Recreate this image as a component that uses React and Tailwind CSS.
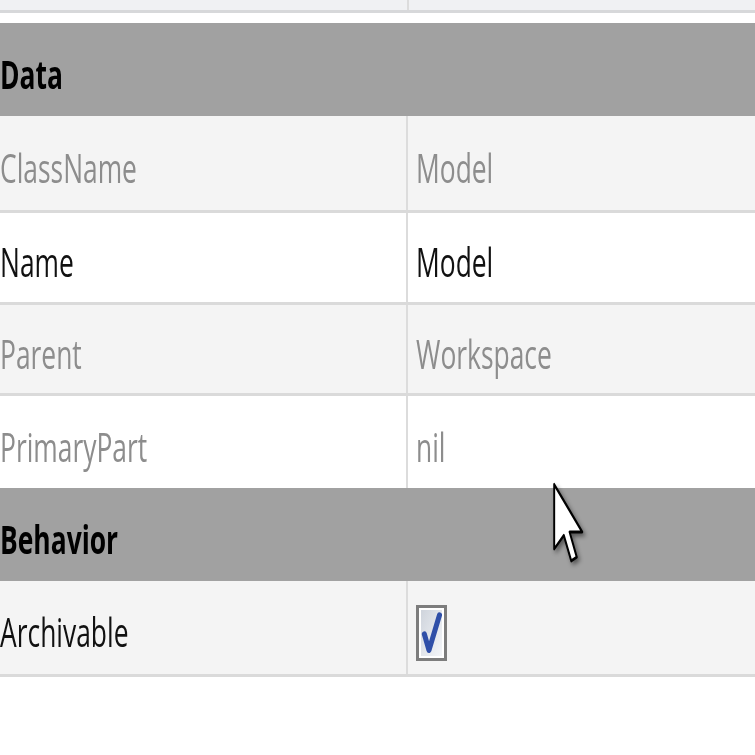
import React from "react";

const T = ({ children, className = "" }) => (
  <span className={"inline-block origin-left scale-x-[0.66] whitespace-nowrap text-[40px] leading-none " + className}>
    {children}
  </span>
);

function Row({ label, value, bg, dim, h, border = true, children }) {
  const color = dim ? "text-[#8d8d8d]" : "text-[#111]";
  return (
    <div className={"flex " + bg + " " + h + (border ? " border-b-[3px] border-[#dadada]" : "")}>
      <div className="w-[408px] shrink-0 border-r-[2px] border-[#dcdcdc] flex items-center pt-[9px]">
        <T className={color}>{label}</T>
      </div>
      <div className="flex-1 flex items-center pl-[8px] pt-[9px]">
        {children ? children : <T className={color}>{value}</T>}
      </div>
    </div>
  );
}

function Header({ label, h }) {
  return (
    <div className={"flex items-center bg-[#a1a1a1] pt-[9px] " + h}>
      <T className="font-bold text-black">{label}</T>
    </div>
  );
}

function Checkbox() {
  return (
    <div className="mt-[2px] w-[31px] h-[56px] border-[3px] border-[#7d7d7d] bg-white p-[2px]">
      <div className="w-full h-full bg-gradient-to-br from-[#cfd4dc] to-[#f4f6f9] relative">
        <svg viewBox="0 0 10 20" preserveAspectRatio="none" className="absolute inset-0 w-full h-full">
          <path d="M1.6 10.5 L3.8 17.5 L8.8 2.2" fill="none" stroke="#2f4fa8" strokeWidth="2.4" strokeLinejoin="round" strokeLinecap="round" />
        </svg>
      </div>
    </div>
  );
}

export default function App() {
  return (
    <div className="relative w-[755px] h-[755px] overflow-hidden bg-white font-['Open_Sans',sans-serif]">
      <div className="flex h-[13px] bg-[#f0f1f3] border-b-[3px] border-[#d7d8da]">
        <div className="w-[409px] shrink-0 border-r-[2px] border-[#dcdcdc]" />
        <div className="flex-1" />
      </div>
      <div className="h-[10px] bg-white" />
      <Header label="Data" h="h-[93px]" />
      <Row label="ClassName" value="Model" bg="bg-[#f4f4f4]" dim h="h-[97px]" />
      <Row label="Name" value="Model" bg="bg-white" h="h-[92px]" />
      <Row label="Parent" value="Workspace" bg="bg-[#f4f4f4]" dim h="h-[91px]" />
      <Row label="PrimaryPart" value="nil" bg="bg-white" dim h="h-[92px]" border={false} />
      <Header label="Behavior" h="h-[93px]" />
      <Row label="Archivable" bg="bg-[#f4f4f4]" h="h-[96px]">
        <Checkbox />
      </Row>
      <svg
        viewBox="0 0 12 20"
        preserveAspectRatio="none"
        className="absolute left-[552px] top-[481px] w-[33px] h-[85px] drop-shadow-[2px_3px_2px_rgba(0,0,0,0.45)]"
      >
        <path
          d="M0.8 0.8 L0.8 16 L4.3 12.8 L7 18.8 L9 17.9 L6.4 12 L11 12 Z"
          fill="white"
          stroke="black"
          strokeWidth="0.7"
          strokeLinejoin="round"
        />
      </svg>
    </div>
  );
}
